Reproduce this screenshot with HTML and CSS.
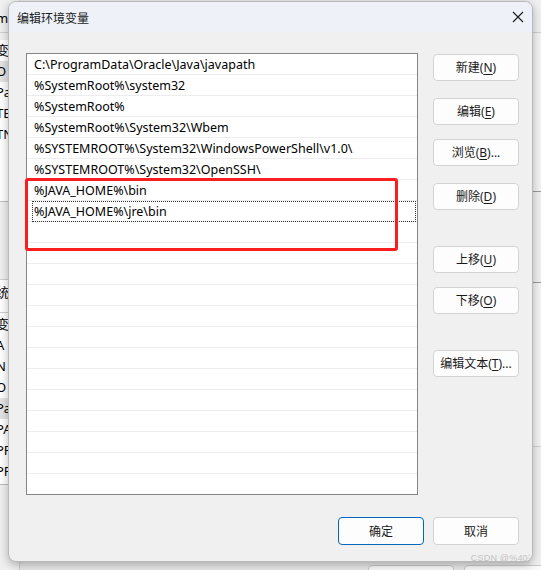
FILE: index.html
```html
<!DOCTYPE html>
<html lang="zh-CN">
<head>
<meta charset="utf-8">
<title>编辑环境变量</title>
<link rel="stylesheet" href="styles.css">
</head>
<body>
<div class="desktop">
  <div class="bg-window bg-left">
    <div class="bg-top"><span>m</span></div>
    <div class="bg-list bg-list-1">
      <div class="bg-row">变</div>
      <div class="bg-row sel">O</div>
      <div class="bg-row">Pa</div>
      <div class="bg-row">TE</div>
      <div class="bg-row">TN</div>
    </div>
    <div class="bg-gap"></div>
    <div class="bg-list bg-list-2">
      <div class="bg-row">统</div>
      <div class="bg-row sep">变</div>
      <div class="bg-row">A</div>
      <div class="bg-row">N</div>
      <div class="bg-row">O</div>
      <div class="bg-row sel">Pa</div>
      <div class="bg-row">PA</div>
      <div class="bg-row">PR</div>
      <div class="bg-row">PR</div>
    </div>
  </div>
  <div class="bg-window bg-right">
    <div class="bg-r-block"></div>
    <div class="bg-r-block2"></div>
  </div>
  <div class="bg-buttons">
    <span class="bg-btn"></span><span class="bg-btn"></span>
  </div>

  <div class="dialog">
    <div class="titlebar">
      <span class="title">编辑环境变量</span>
      <svg class="close" width="12" height="12" viewBox="0 0 12 12"><path d="M1 1 L11 11 M11 1 L1 11" stroke="#1a1a1a" stroke-width="1.1" fill="none"/></svg>
    </div>
    <div class="main">
      <div class="list">
        <div class="row"><span class="cell">C:\ProgramData\Oracle\Java\javapath</span></div>
        <div class="row"><span class="cell">%SystemRoot%\system32</span></div>
        <div class="row"><span class="cell">%SystemRoot%</span></div>
        <div class="row"><span class="cell">%SystemRoot%\System32\Wbem</span></div>
        <div class="row"><span class="cell">%SYSTEMROOT%\System32\WindowsPowerShell\v1.0\</span></div>
        <div class="row"><span class="cell">%SYSTEMROOT%\System32\OpenSSH\</span></div>
        <div class="row"><span class="cell">%JAVA_HOME%\bin</span></div>
        <div class="row focus"><span class="cell">%JAVA_HOME%\jre\bin</span></div>
        <div class="row"></div>
        <div class="row"></div>
        <div class="row"></div>
        <div class="row"></div>
        <div class="row"></div>
        <div class="row"></div>
        <div class="row"></div>
        <div class="row"></div>
        <div class="row"></div>
        <div class="row"></div>
        <div class="row"></div>
        <div class="row"></div>
        <div class="row last"></div>
        <div class="highlight"></div>
      </div>
      <div class="side">
        <button class="btn">新建(<u>N</u>)</button>
        <button class="btn gap-m">编辑(<u>E</u>)</button>
        <button class="btn gap-s">浏览(<u>B</u>)...</button>
        <button class="btn gap-m">删除(<u>D</u>)</button>
        <button class="btn gap-l">上移(<u>U</u>)</button>
        <button class="btn gap-s">下移(<u>O</u>)</button>
        <button class="btn gap-l">编辑文本(<u>T</u>)...</button>
      </div>
    </div>
    <div class="footer">
      <button class="btn primary">确定</button>
      <button class="btn">取消</button>
    </div>
  </div>
  <div class="watermark">CSDN @%40⁝</div>
</div>
</body>
</html>
```

FILE: styles.css
```css
* { box-sizing: border-box; }
html, body { margin: 0; padding: 0; }
body {
  width: 541px;
  height: 570px;
  overflow: hidden;
  background: #e9e9e9;
  font-family: "Noto Sans", "Noto Sans CJK SC", sans-serif;
  font-size: 12px;
  color: #000;
}
.desktop { position: relative; width: 541px; height: 570px; overflow: hidden; }

/* background windows peeking out */
.bg-window { position: absolute; background: #f0f0f0; }
.bg-left { left: -60px; top: 0; width: 80px; height: 570px; border-right: 1px solid #cfcfcf; }
.bg-top { height: 33px; border-bottom: 1px solid #cfcfcf; padding: 9px 0 0 56px; font-size: 13px; }
.bg-list { background: #fff; border-bottom: 1px solid #bdbdbd; }
.bg-list-1 { margin-top: 7px; height: 162px; }
.bg-row { height: 21px; line-height: 21px; padding-left: 56px; font-size: 13px; white-space: nowrap; }
.bg-row.sel { background: #e3e3e3; }
.bg-row.sep { border-top: 1px solid #cfcfcf; margin-top: 9px; height: 23px; line-height: 23px; }
.bg-gap { height: 78px; border-bottom: 1px solid #cfcfcf; }
.bg-list-2 { padding-top: 2px; height: 205px; }
.bg-right { left: 530px; top: 0; width: 20px; height: 570px; background: #f0f0f0; }
.bg-r-block { margin-top: 32px; height: 160px; border-top: 1px solid #cfcfcf; border-bottom: 1px solid #9a9a9a; background: #f3f3f3; }
.bg-r-block2 { margin-top: 90px; height: 165px; border-top: 1px solid #9a9a9a; border-bottom: 1px solid #cfcfcf; background: #f3f3f3; }
.bg-buttons { position: absolute; left: 368px; top: 565px; display: flex; gap: 10px; }
.bg-btn { width: 86px; height: 20px; border: 1px solid #c9c9c9; border-radius: 4px; background: #fbfbfb; }

/* dialog */
.dialog {
  position: absolute;
  left: 8px;
  top: 1px;
  width: 525px;
  height: 561px;
  background: #f0f0f0;
  border: 1px solid #b9b9b9;
  border-radius: 8px;
  box-shadow: 0 3px 10px rgba(0,0,0,0.28);
  overflow: hidden;
  display: flex;
  flex-direction: column;
}
.titlebar {
  height: 30px;
  flex: none;
  background: #eef2f8;
  display: flex;
  align-items: center;
  justify-content: space-between;
  padding: 0 8px 0 8px;
}
.title { font-size: 12px; color: #1a1a1a; font-family: "Noto Sans CJK SC", sans-serif; }
.close { display: block; margin-right: 0; }

.main {
  display: flex;
  padding: 21px 13px 0 17px;
  gap: 15px;
}
.list {
  position: relative;
  width: 392px;
  height: 442px;
  flex: none;
  background: #fff;
  border: 1px solid #858585;
}
.row {
  height: 21px;
  border-bottom: 1px solid #ededed;
}
.row.last { border-bottom: none; }
.cell {
  display: block;
  height: 20px;
  line-height: 21px;
  padding-left: 7px;
  white-space: nowrap;
  color: #000;
  font-size: 12.5px;
}
.row.focus .cell {
  margin-left: 5px;
  margin-right: 1px;
  padding-left: 1px;
  border: 1px dotted #333;
  line-height: 19px;
  height: 21px;
}
.highlight {
  position: absolute;
  left: -2px;
  top: 124px;
  width: 373px;
  height: 73px;
  border: 3px solid #fa1e1e;
  border-radius: 3px;
}

.side {
  display: flex;
  flex-direction: column;
  padding-top: 1px;
}
.btn {
  width: 86px;
  height: 27px;
  padding: 0;
  background: #fdfdfd;
  border: 1px solid #d3d3d3;
  border-radius: 4px;
  font-family: "Noto Sans", "Noto Sans CJK SC", sans-serif;
  font-size: 12px;
  color: #1a1a1a;
  line-height: 25px;
  text-align: center;
}
.btn u { text-underline-offset: 2px; }
.gap-s { margin-top: 14px; }
.gap-m { margin-top: 17px; }
.gap-l { margin-top: 36px; }

.footer {
  display: flex;
  justify-content: flex-end;
  gap: 9px;
  padding: 22px 13px 0 0;
}
.footer .btn { height: 28px; }
.btn.primary { border-color: #0067c0; }

.watermark {
  position: absolute;
  right: 11px;
  top: 551px;
  font-size: 9px;
  color: #c2c2c2;
  font-family: "Liberation Sans", sans-serif;
  letter-spacing: 0.2px;
}
```
